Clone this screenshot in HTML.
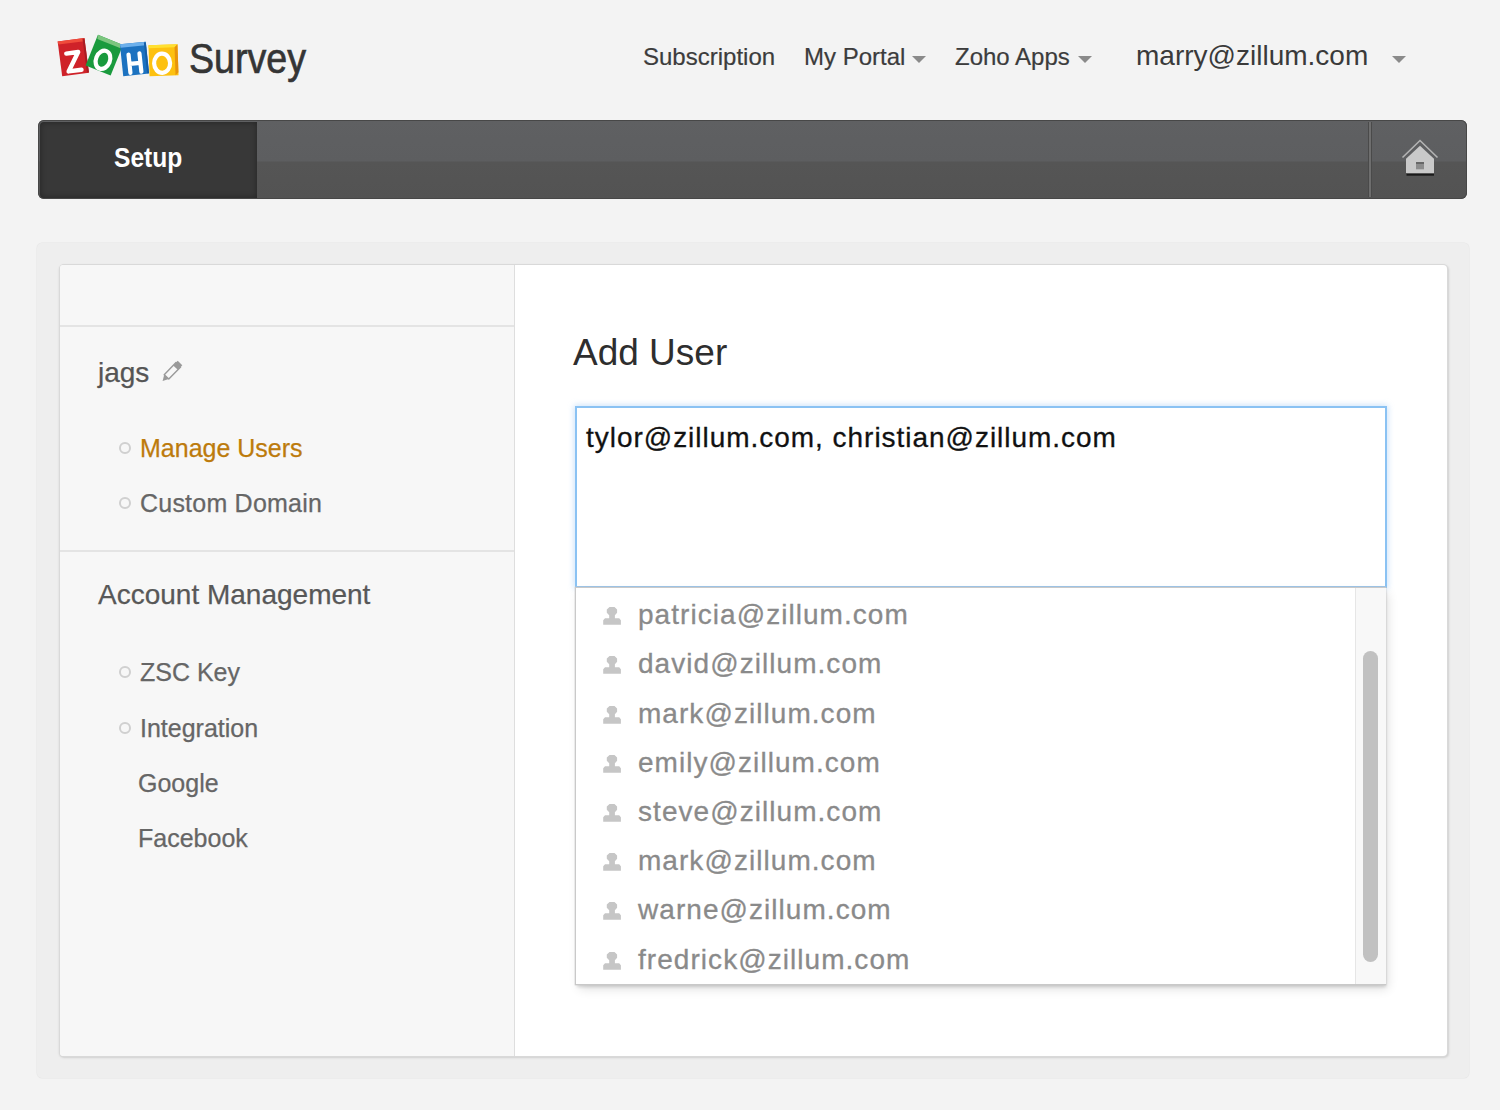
<!DOCTYPE html>
<html><head><meta charset="utf-8">
<style>
html,body{margin:0;padding:0;}
body{width:1500px;height:1110px;overflow:hidden;background:#f3f3f3;position:relative;font-family:"Liberation Sans",sans-serif;}
.abs{position:absolute;}
.t{position:absolute;white-space:nowrap;line-height:1;}
/* top nav */
.nav{color:#3c3c3c;font-size:24px;-webkit-text-stroke:0.2px currentColor;}
.caret{position:absolute;width:0;height:0;border-left:7px solid transparent;border-right:7px solid transparent;border-top:7px solid #8a8a8a;}
/* dark bar */
#bar{left:38px;top:120px;width:1429px;height:79px;border-radius:6px;background:linear-gradient(#5f6062 0,#5d5e60 41px,#555555 42px,#535353 100%);box-shadow:inset 0 0 0 1px #474747;}
#setup{left:40px;top:122px;width:217px;height:75.5px;background:#383838;border-radius:4px 0 0 4px;box-shadow:inset 0 0 6px rgba(0,0,0,.35);}
#div{left:1367.5px;top:122px;width:2px;height:75px;background:#6e6e6e;border-left:1px solid #4a4a4a;border-right:1px solid #4a4a4a;}
/* panels */
#outer{left:37px;top:243px;width:1431.5px;height:834.5px;background:#eeeeee;border-radius:5px;box-shadow:0 0 0 0.5px #e6e6e6;}
#card{left:59.5px;top:265px;width:1387px;height:790.5px;background:#fff;border-radius:4px;box-shadow:0 0 0 1px #d9d9d9,0.5px 1px 2px 1px #d0d0d0;}
#side{left:59.5px;top:265px;width:454.5px;height:790.5px;background:#f7f7f7;border-right:1.5px solid #dedede;border-radius:3px 0 0 3px;}
.hr{position:absolute;left:60px;width:454px;height:2px;background:#e4e4e4;}
.mi{color:#666666;font-size:25px;-webkit-text-stroke:0.25px currentColor;}
.bul{position:absolute;width:7.6px;height:7.6px;border:2px solid #d0d0d0;border-radius:50%;margin:0.1px 0 0 0.3px;}
/* input */
#inp{left:574.5px;top:406px;width:808px;height:178px;border:2px solid #8ac2f3;background:#fff;box-shadow:0 0 6px 1px rgba(130,185,240,.4);}
.em{font-size:28px;letter-spacing:1.05px;-webkit-text-stroke:0.3px currentColor;}
#dd{left:576px;top:588px;width:809px;height:396px;background:#fff;box-shadow:0 0 0 1.3px #c9c9c9,1px 3px 3px rgba(0,0,0,.14),3px 5px 10px rgba(0,0,0,.12);}
#track{left:1355px;top:588px;width:30px;height:396px;background:#f8f8f8;border-left:1.5px solid #e6e6e6;}
#thumb{left:1363px;top:651px;width:15px;height:311px;background:#c1c1c1;border-radius:8px;}
.row{position:absolute;left:602px;}
.usr{position:absolute;width:18px;height:18px;}
</style></head><body>

<!-- logo -->
<svg class="abs" style="left:50px;top:28px" width="140" height="60" viewBox="50 28 140 60">
  <g transform="translate(73.3,57.2) rotate(-7.5)">
    <rect x="-13.5" y="-17.5" width="27" height="35" fill="#cf2229"/>
    <polygon points="-13.5,-17.5 13.5,-17.5 13,-14.5 -13,-14.5" fill="#ef4b3b"/>
    <rect x="11.5" y="-17" width="2" height="34" fill="#a81c22"/>
    <path d="M-6.5,-4.5 L5.5,-4.5 L-6.5,13.5 L6.5,13.5" fill="none" stroke="#fff" stroke-width="4.4" stroke-linejoin="round" stroke-linecap="round"/>
  </g>
  <g transform="translate(104.3,55.2) rotate(22)">
    <rect x="-13.5" y="-16.5" width="27" height="33" fill="#199a3d"/>
    <polygon points="-13.5,-16.5 13.5,-16.5 12.5,-12.5 -12.5,-12.5" fill="#7bc57e"/>
    <ellipse cx="0.5" cy="4.8" rx="7" ry="9.4" fill="none" stroke="#fff" stroke-width="4.2"/>
  </g>
  <g transform="translate(134.5,58.9) rotate(-6)">
    <rect x="-13" y="-16" width="26" height="32" fill="#1c72c0"/>
    <polygon points="-13,-16 13,-16 12.5,-12.5 -12.5,-12.5" fill="#6cb0ec"/>
    <rect x="11" y="-15.5" width="2" height="31" fill="#155ea6"/>
    <path d="M-5.5,-5 L-5.5,13.5 M5.5,-5 L5.5,13.5 M-5.5,4.5 L5.5,4.5" fill="none" stroke="#fff" stroke-width="4.2" stroke-linecap="round"/>
  </g>
  <g transform="translate(163.5,60.2) rotate(-2)">
    <rect x="-14.5" y="-15.5" width="29" height="31" fill="#fdc110"/>
    <polygon points="-14.5,-15.5 14.5,-15.5 11.5,-12.5 -14.5,-12.5" fill="#ffe031"/>
    <polygon points="11.5,-12.5 14.5,-15.5 14.5,12.5 11.5,15.5" fill="#e8940d"/>
    <ellipse cx="-1.5" cy="3" rx="8" ry="9.6" fill="none" stroke="#fff" stroke-width="4.2"/>
  </g>
</svg>
<div class="t" style="left:189px;top:37px;font-size:43px;color:#353535;-webkit-text-stroke:0.7px #353535;transform-origin:0 0;transform:scaleX(0.875)">Survey</div>

<div class="t nav" style="left:643px;top:44.5px;">Subscription</div>
<div class="t nav" style="left:804px;top:44.5px;">My Portal</div>
<div class="caret" style="left:912px;top:56px"></div>
<div class="t nav" style="left:955px;top:44.5px;">Zoho Apps</div>
<div class="caret" style="left:1078px;top:56px"></div>
<div class="t" style="left:1136px;top:42px;font-size:28px;color:#3a3a3a;">marry@zillum.com</div>
<div class="caret" style="left:1392px;top:56px"></div>

<div id="bar" class="abs"></div>
<div id="setup" class="abs"></div>
<div class="t" style="left:114px;top:145.4px;font-size:27px;font-weight:bold;color:#fff;transform-origin:0 0;transform:scaleX(0.91)">Setup</div>
<div id="div" class="abs"></div>
<svg class="abs" style="left:1395px;top:130px" width="50" height="50" viewBox="1395 130 50 50">
  <polyline points="1402.5,157.5 1420,140.5 1437.5,157.5" fill="none" stroke="#b4b4b4" stroke-width="1.6"/>
  <polygon points="1406,158.8 1420,145.8 1434,158.8 1434,173 1406,173" fill="#c9c9c9"/>
  <rect x="1416" y="162" width="8" height="7.3" fill="#8c8c8c"/>
  <rect x="1416" y="162" width="8" height="2" fill="#666"/>
  <rect x="1406.5" y="174" width="27.5" height="1.7" fill="#1a1a1a"/>
</svg>

<div id="outer" class="abs"></div>
<div id="card" class="abs"></div>
<div id="side" class="abs"></div>
<div class="hr" style="top:325px"></div>
<div class="hr" style="top:550px"></div>

<div class="t" style="left:98px;top:359px;font-size:28px;color:#555;-webkit-text-stroke:0.25px #555;">jags</div>
<svg class="abs" style="left:155px;top:355px" width="32" height="32" viewBox="155 355 32 32">
  <polygon points="168.8,379.1 164.2,374.7 176,362.5 180.6,366.9" fill="none" stroke="#9a9a9a" stroke-width="1.4" stroke-linejoin="round"/>
  <polygon points="177.8,369.8 173.2,365.4 177.7,360.8 182.3,365.2" fill="#9a9a9a"/>
  <polygon points="162.6,381 164.2,374.7 168.8,379.1" fill="#9a9a9a"/>
</svg>

<div class="bul" style="left:119px;top:442px"></div>
<div class="t mi" style="left:140px;top:436px;color:#bd7b0c;">Manage Users</div>
<div class="bul" style="left:119px;top:497px"></div>
<div class="t mi" style="left:140px;top:491px;letter-spacing:0.22px;">Custom Domain</div>

<div class="t" style="left:98px;top:581px;font-size:28px;color:#585858;-webkit-text-stroke:0.25px #585858;">Account Management</div>
<div class="bul" style="left:119px;top:666px"></div>
<div class="t mi" style="left:140px;top:660px;">ZSC Key</div>
<div class="bul" style="left:119px;top:722px"></div>
<div class="t mi" style="left:140px;top:716px;">Integration</div>
<div class="t mi" style="left:138px;top:771px;">Google</div>
<div class="t mi" style="left:138px;top:826px;">Facebook</div>

<div class="t" style="left:573px;top:333.5px;font-size:37px;color:#2e2e2e;">Add User</div>
<div id="inp" class="abs"></div>
<div class="t em" style="left:586px;top:423.5px;color:#111;letter-spacing:0.97px;">tylor@zillum.com, christian@zillum.com</div>

<div id="dd" class="abs"></div>
<div id="track" class="abs"></div>
<div id="thumb" class="abs"></div>
<svg class="usr" style="left:602.5px;top:607.2px" width="18" height="18" viewBox="0 0 18 18"><path d="M6.5 0 L11.5 0 L14.1 2.6 L14.1 5.8 L11.9 8.2 L11.9 11.3 L16.2 11.3 L17.9 13.3 L17.9 17.8 L0.2 17.8 L0.2 13.3 L2 11.3 L6.2 11.3 L6.2 8.2 L3.8 5.8 L3.8 2.6 Z" fill="#c6c6c6"/></svg>
<div class="t em" style="left:638px;top:601.1px;color:#8a8a8a;">patricia@zillum.com</div>
<svg class="usr" style="left:602.5px;top:656.4px" width="18" height="18" viewBox="0 0 18 18"><path d="M6.5 0 L11.5 0 L14.1 2.6 L14.1 5.8 L11.9 8.2 L11.9 11.3 L16.2 11.3 L17.9 13.3 L17.9 17.8 L0.2 17.8 L0.2 13.3 L2 11.3 L6.2 11.3 L6.2 8.2 L3.8 5.8 L3.8 2.6 Z" fill="#c6c6c6"/></svg>
<div class="t em" style="left:638px;top:650.3px;color:#8a8a8a;">david@zillum.com</div>
<svg class="usr" style="left:602.5px;top:705.6px" width="18" height="18" viewBox="0 0 18 18"><path d="M6.5 0 L11.5 0 L14.1 2.6 L14.1 5.8 L11.9 8.2 L11.9 11.3 L16.2 11.3 L17.9 13.3 L17.9 17.8 L0.2 17.8 L0.2 13.3 L2 11.3 L6.2 11.3 L6.2 8.2 L3.8 5.8 L3.8 2.6 Z" fill="#c6c6c6"/></svg>
<div class="t em" style="left:638px;top:699.5px;color:#8a8a8a;">mark@zillum.com</div>
<svg class="usr" style="left:602.5px;top:754.8px" width="18" height="18" viewBox="0 0 18 18"><path d="M6.5 0 L11.5 0 L14.1 2.6 L14.1 5.8 L11.9 8.2 L11.9 11.3 L16.2 11.3 L17.9 13.3 L17.9 17.8 L0.2 17.8 L0.2 13.3 L2 11.3 L6.2 11.3 L6.2 8.2 L3.8 5.8 L3.8 2.6 Z" fill="#c6c6c6"/></svg>
<div class="t em" style="left:638px;top:748.7px;color:#8a8a8a;">emily@zillum.com</div>
<svg class="usr" style="left:602.5px;top:804.0px" width="18" height="18" viewBox="0 0 18 18"><path d="M6.5 0 L11.5 0 L14.1 2.6 L14.1 5.8 L11.9 8.2 L11.9 11.3 L16.2 11.3 L17.9 13.3 L17.9 17.8 L0.2 17.8 L0.2 13.3 L2 11.3 L6.2 11.3 L6.2 8.2 L3.8 5.8 L3.8 2.6 Z" fill="#c6c6c6"/></svg>
<div class="t em" style="left:638px;top:797.9px;color:#8a8a8a;">steve@zillum.com</div>
<svg class="usr" style="left:602.5px;top:853.2px" width="18" height="18" viewBox="0 0 18 18"><path d="M6.5 0 L11.5 0 L14.1 2.6 L14.1 5.8 L11.9 8.2 L11.9 11.3 L16.2 11.3 L17.9 13.3 L17.9 17.8 L0.2 17.8 L0.2 13.3 L2 11.3 L6.2 11.3 L6.2 8.2 L3.8 5.8 L3.8 2.6 Z" fill="#c6c6c6"/></svg>
<div class="t em" style="left:638px;top:847.1px;color:#8a8a8a;">mark@zillum.com</div>
<svg class="usr" style="left:602.5px;top:902.4px" width="18" height="18" viewBox="0 0 18 18"><path d="M6.5 0 L11.5 0 L14.1 2.6 L14.1 5.8 L11.9 8.2 L11.9 11.3 L16.2 11.3 L17.9 13.3 L17.9 17.8 L0.2 17.8 L0.2 13.3 L2 11.3 L6.2 11.3 L6.2 8.2 L3.8 5.8 L3.8 2.6 Z" fill="#c6c6c6"/></svg>
<div class="t em" style="left:638px;top:896.3px;color:#8a8a8a;">warne@zillum.com</div>
<svg class="usr" style="left:602.5px;top:951.6px" width="18" height="18" viewBox="0 0 18 18"><path d="M6.5 0 L11.5 0 L14.1 2.6 L14.1 5.8 L11.9 8.2 L11.9 11.3 L16.2 11.3 L17.9 13.3 L17.9 17.8 L0.2 17.8 L0.2 13.3 L2 11.3 L6.2 11.3 L6.2 8.2 L3.8 5.8 L3.8 2.6 Z" fill="#c6c6c6"/></svg>
<div class="t em" style="left:638px;top:945.5px;color:#8a8a8a;">fredrick@zillum.com</div>
</body></html>
